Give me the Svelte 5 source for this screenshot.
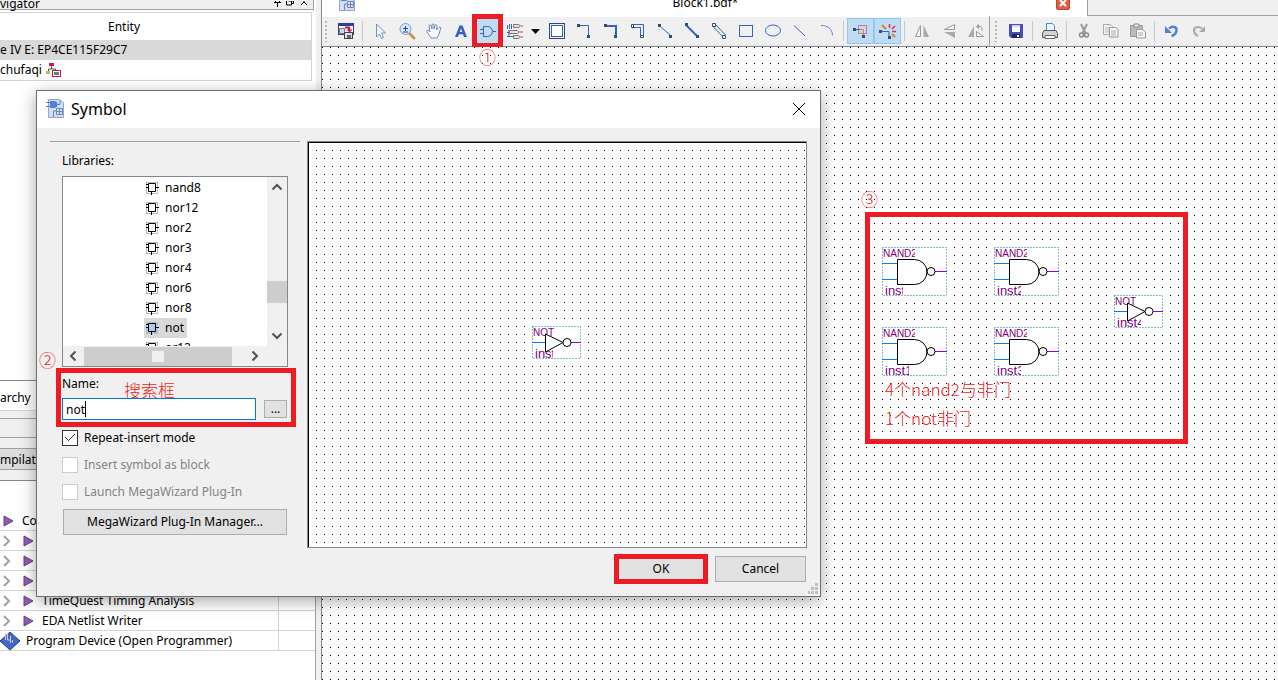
<script lang="ts">
	type Tool = { id: string; label: string; icon?: string; on?: boolean; marked?: boolean };

	const BLUE = '#3a5fc0';
	const NODE = '#2f4f6f';

	const mainTools: Tool[] = [
		{
			id: 'detach',
			label: 'Detach window',
			icon: `<rect x="0.5" y="0.5" width="15" height="11" fill="#fff" stroke="#2c3f9e"/><rect x="0" y="0" width="16" height="3" fill="#2c3f9e"/><path d="M1.500 5.500h5v5h-5z" fill="#d4d8e2" stroke="#777"/><path d="M7 4.500h4v3" fill="none" stroke="#d0103a" stroke-width="2"/><path d="M8.500 6.500h6l-3 3z" fill="#d0103a"/><rect x="6.500" y="9.500" width="8" height="6" fill="#dde" stroke="#444"/><path d="M9 12h4v3H9z" fill="#666"/>`
		},
		{ id: 'sep1', label: '' },
		{
			id: 'select',
			label: 'Selection tool',
			icon: `<path d="M4.500 1v13l3-3 2 4.500 2-1-2-4.500h4z" fill="#f4f7ff" stroke="#7a8fb8"/>`
		},
		{
			id: 'zoom',
			label: 'Zoom tool',
			icon: `<path d="M10 10l5 5" stroke="#c9925a" stroke-width="3" stroke-linecap="round"/><circle cx="6.500" cy="6" r="5.500" fill="#d6e8fb" stroke="#7f9cc8"/><path d="M6.500 3v5M4 5.500h5M4 9h5" stroke="#2446a8"/>`
		},
		{
			id: 'hand',
			label: 'Hand tool',
			icon: `<path d="M5 15L1 9c-1-2 1-2.500 2-1l1 1-1-6c0-1.500 1.500-1.500 2 0l1 3V2c0-1.500 2-1.500 2 0v4l1-3.500c.5-1.500 2-1 2 .5L10.500 7 13 4.500c1-1 2.500-.5 1.500 1.500L13 11l-2 4z" fill="#f7f9ff" stroke="#7389b4"/>`
		},
		{
			id: 'text',
			label: 'Text tool',
			icon: `<path d="M2 14L6.500 2.500h3L14 14h-3l-1-2.800H6L5 14zM6.800 9h2.500L8 5.300z" fill="${BLUE}" fill-rule="evenodd"/>`
		},
		{
			id: 'symbol',
			label: 'Symbol tool',
			on: true,
			marked: true,
			icon: `<path d="M3.500 3.500h4a5 5 0 0 1 0 10h-4zM0 6.500h3.500M0 10.500h3.500M12.500 8.500H16" fill="none" stroke="${BLUE}"/>`
		},
		{
			id: 'pin',
			label: 'Pin tool',
			icon: `<path d="M.5 2v4M2.500 6V1M4.500 1v5M0 9.500h5M0 13.500h6M2 7v6" fill="none" stroke="${BLUE}"/><path d="M6.500 1.500h5l2 1.500-2 1.500h-5zM2.500 7.500h8l2 1.500-2 1.500h-8zM6.500 12.500h5l2 1.500-2 1.500h-5z" fill="#e3e3e8" stroke="#777"/><path d="M14 3h2M13 9h3M14 14h2" stroke="#e03030"/>`
		},
		{ id: 'drop', label: 'Pin options' },
		{
			id: 'block',
			label: 'Block tool',
			icon: `<rect x="0.500" y="0.500" width="15" height="15" fill="none" stroke="${NODE}"/><rect x="2.500" y="2.500" width="11" height="11" fill="#fff" stroke="${BLUE}"/>`
		},
		{
			id: 'node',
			label: 'Orthogonal node tool',
			icon: `<path d="M3 2.500h9.500V13" fill="none" stroke="${BLUE}"/><path d="M1 1h3v3H1zM11 12h3v3h-3z" fill="${NODE}"/>`
		},
		{
			id: 'bus',
			label: 'Orthogonal bus tool',
			icon: `<path d="M3 3h10v10" fill="none" stroke="${BLUE}" stroke-width="2"/><path d="M1 1h3v3H1zM11 12h3v3h-3z" fill="${NODE}"/>`
		},
		{
			id: 'conduit',
			label: 'Orthogonal conduit tool',
			icon: `<path d="M3 1.500h10.500V13M3 4.500h7.500V13" fill="none" stroke="${BLUE}"/><path d="M1.500 1.500h2v3h-2zM10.500 12.500h3v2h-3z" fill="#fff" stroke="${NODE}"/>`
		},
		{
			id: 'dnode',
			label: 'Diagonal node tool',
			icon: `<path d="M3 3l11 10" stroke="${BLUE}"/><path d="M1 1h3v3H1zM12 12h3v3h-3z" fill="${NODE}"/>`
		},
		{
			id: 'dbus',
			label: 'Diagonal bus tool',
			icon: `<path d="M2 2l11 11" stroke="${BLUE}" stroke-width="2"/><path d="M1 0h3v3H1zM12 12h3v3h-3z" fill="${NODE}"/>`
		},
		{
			id: 'dconduit',
			label: 'Diagonal conduit tool',
			icon: `<path d="M4 1l10.500 11M2 3.500L12 14" stroke="${BLUE}"/><path d="M1.500 0.500h3v3h-3zM11.500 12.500h3v3h-3z" fill="#fff" stroke="${NODE}"/>`
		},
		{
			id: 'rect',
			label: 'Rectangle tool',
			icon: `<rect x="1.500" y="2.500" width="13" height="11" fill="none" stroke="${BLUE}"/>`
		},
		{
			id: 'oval',
			label: 'Oval tool',
			icon: `<ellipse cx="8" cy="7.500" rx="7.500" ry="5.500" fill="none" stroke="${BLUE}"/>`
		},
		{ id: 'line', label: 'Line tool', icon: `<path d="M2 2.500l11 10.500" stroke="${BLUE}"/>` },
		{
			id: 'arc',
			label: 'Arc tool',
			icon: `<path d="M2 2.500c6 0 11.500 3 11.500 10" fill="none" stroke="#6c87cc"/>`
		},
		{ id: 'sep2', label: '' },
		{
			id: 'rubber',
			label: 'Use rubberbanding',
			on: true,
			icon: `<path d="M5.500 2.500h8v8h-8z" fill="none" stroke="#d01050" stroke-dasharray="1 1"/><path d="M2 6.500h8" stroke="${BLUE}"/><path d="M7 6.500h3.500V13" fill="none" stroke="#e08020"/><path d="M0 5h3v3H0zM9 12h3v3H9z" fill="${NODE}"/>`
		},
		{
			id: 'partial',
			label: 'Use partial line selection',
			on: true,
			icon: `<path d="M1 8.500h8v6" fill="none" stroke="${BLUE}"/><path d="M-1 7h3v3h-3zM8 13h3v3H8z" fill="${NODE}"/><path d="M2 2l4 4M12 11l3 3" stroke="#e08020" stroke-width="2"/><path d="M9.500 1v4M12 6l3-3M12 8.500h4" stroke="#e03050" stroke-width="1.500"/>`
		},
		{ id: 'sep3', label: '' },
		{
			id: 'fliph',
			label: 'Flip horizontal',
			icon: `<path d="M6.500 2.500v11h-5z" fill="#f4f4f4" stroke="#999"/><path d="M9.500 2v12H15z" fill="#aaa"/>`
		},
		{
			id: 'flipv',
			label: 'Flip vertical',
			icon: `<path d="M13.500 1.500v5h-10z" fill="#f4f4f4" stroke="#999"/><path d="M14 9v6L3 9z" fill="#aaa"/>`
		},
		{
			id: 'rotate',
			label: 'Rotate left',
			icon: `<path d="M6 3v11H0z" fill="#aaa"/><path d="M8.500 13.500h7l-7-5z" fill="#fff" stroke="#999"/><path d="M10 3.500h2c2 0 2 2 2 4" fill="none" stroke="#999"/><path d="M8 3.500l3-2.500v5z" fill="#999"/>`
		}
	];

	const fileTools: Tool[] = [
		{
			id: 'save',
			label: 'Save',
			icon: `<path d="M1 1h14v14H3l-2-2z" fill="#4a4cbc"/><path d="M4 2h8v7H4z" fill="#fff"/><path d="M4 2h8v2H4z" fill="#ccd6f8"/><path d="M4 11h8v4H4z" fill="#222858"/><path d="M9 12h2v2H9z" fill="#fff"/>`
		},
		{ id: 'sep4', label: '' },
		{
			id: 'print',
			label: 'Print',
			icon: `<path d="M4.500 8V.5h6l2 2V8z" fill="#eaf3ff" stroke="#4a8ad0"/><path d="M2 7.500h12l1.500 3v4H.5v-4z" fill="#d4d4d4" stroke="#555"/><path d="M3 12.500h10v3H3z" fill="#fff" stroke="#666"/>`
		},
		{ id: 'sep5', label: '' },
		{
			id: 'cut',
			label: 'Cut',
			icon: `<path d="M5 1l4.500 9M11 1L6.500 10" stroke="#999" stroke-width="2"/><circle cx="5.500" cy="12" r="2" fill="none" stroke="#8a8a8a" stroke-width="1.500"/><circle cx="10.500" cy="12" r="2" fill="none" stroke="#8a8a8a" stroke-width="1.500"/>`
		},
		{
			id: 'copy',
			label: 'Copy',
			icon: `<path d="M.5 1.500h7l2 2v8h-9z" fill="#f4f4f4" stroke="#aaa"/><path d="M2 5h5M2 7h5M2 9h5" stroke="#bbb"/><path d="M6.500 4.500h6l2.500 2v7.500H6.500z" fill="#f8f8f8" stroke="#999"/><path d="M8 8h5M8 10h5M8 12h5" stroke="#aaa"/>`
		},
		{
			id: 'paste',
			label: 'Paste',
			icon: `<path d="M.5 2.500h12v11H.5z" fill="#bbb" stroke="#999"/><path d="M4 1h5v3H4z" fill="#eee" stroke="#888"/><path d="M6.500 6.500h6l3 2.500v6h-9z" fill="#f6f6f6" stroke="#999"/><path d="M8 10h5M8 12h5" stroke="#aaa"/>`
		},
		{ id: 'sep6', label: '' },
		{
			id: 'undo',
			label: 'Undo',
			icon: `<path d="M5 5.500c4-3 8-1.500 7.500 2-.3 2.500-2 4.500-5 5.500" fill="none" stroke="#4f80dd" stroke-width="2.500"/><path d="M1 3v7h7z" fill="#4f80dd"/>`
		},
		{
			id: 'redo',
			label: 'Redo',
			icon: `<path d="M11 5.500C7 2.500 2.500 4.500 3 8c.3 2 1.500 4 4 5" fill="none" stroke="#aaa" stroke-width="2"/><path d="M14 3v6H8z" fill="#aaa"/>`
		}
	];

	const symbols = ['nand8', 'nor12', 'nor2', 'nor3', 'nor4', 'nor6', 'nor8', 'not', 'or12'];

	const tasks = [
		'Analysis & Synthesis',
		'Fitter (Place & Route)',
		'Assembler (Generate files)',
		'TimeQuest Timing Analysis',
		'EDA Netlist Writer'
	];

	const gates = [
		{ name: 'inst', x: 560, y: 200, clip: 18 },
		{ name: 'inst2', x: 672, y: 200, clip: 24 },
		{ name: 'inst1', x: 560, y: 280, clip: 24 },
		{ name: 'inst3', x: 672, y: 280, clip: 24 }
	];

	let selected = $state('not');
	let name = $state('not');
	let repeat = $state(true);
</script>

{#snippet tool(t: Tool)}
	{#if t.id.startsWith('sep')}
		<span class="sep"></span>
	{:else if t.id === 'drop'}
		<button class="tool drop" aria-label={t.label}>
			<svg width="9" height="5" viewBox="0 0 9 5"><path d="M0 0h9L4.500 5z" /></svg>
		</button>
	{:else}
		<button class="tool" class:on={t.on} class:marked={t.marked} aria-label={t.label}>
			<svg width="16" height="16" viewBox="0 0 16 16" overflow="visible">{@html t.icon}</svg>
		</button>
	{/if}
{/snippet}

{#snippet notGate(inst: string, clip: number)}
	<svg class="gate" width="49" height="33" viewBox="0 0 49 33">
		<rect width="49" height="33" fill="#fff" />
		<rect x="0.5" y="0.5" width="48" height="32" class="bounds" />
		<text x="1" y="10" class="kind">NOT</text>
		<svg x="3" y="18" width={clip} height="15"><text x="0" y="14" class="inst">{inst}</text></svg>
		<path d="M0 16.500h13" class="in" />
		<path d="M39 16.500h10" class="out" />
		<path d="M13.500 8v18L31 16.500z" class="body" />
		<circle cx="35" cy="16.500" r="4" class="body" />
	</svg>
{/snippet}

{#snippet nandGate(inst: string, clip: number)}
	<svg class="gate" width="65" height="49" viewBox="0 0 65 49">
		<rect width="65" height="49" fill="#fff" />
		<rect x="0.5" y="0.5" width="64" height="48" class="bounds" />
		<svg x="1" y="0" width="32" height="14"><text x="0" y="10" class="kind">NAND2</text></svg>
		<svg x="3" y="34" width={clip} height="15"><text x="0" y="14" class="inst">{inst}</text></svg>
		<path d="M0 16.500h15M0 32.500h15" class="in" />
		<path d="M53 24.500h12" class="out" />
		<path d="M15.500 12.500h17a12 12 0 0 1 0 25h-17z" class="body" />
		<circle cx="49" cy="24.500" r="4" class="body" />
	</svg>
{/snippet}

{#snippet docIcon()}
	<svg width="18" height="21" viewBox="0 0 18 21">
		<path d="M2.500 1.500h11l4 3v15h-15z" fill="#d3def2" stroke="#8fa6cf" />
		<path d="M0 4.500h5M0 8.500h5M11 6.500h3v-4" fill="none" stroke="#5c7fc0" />
		<path d="M4 3h4a3.500 3.500 0 0 1 0 7H4z" fill="#4f7fd8" />
		<path d="M7.500 19v-6h3M10.500 10.500h6v6h-6zM10.500 13.500h6M13.500 10.500v6" fill="none" stroke="#6f86b4" />
	</svg>
{/snippet}

{#snippet chevron(d: string)}
	<svg width="12" height="12" viewBox="0 0 12 12"><path {d} fill="none" stroke="#505050" stroke-width="2" /></svg>
{/snippet}

{#snippet play()}
	<svg width="11" height="12" viewBox="0 0 11 12">
		<path d="M1 1l9 5-9 5z" fill="#9a55b8" stroke="#5d4a72" />
	</svg>
{/snippet}

<div class="app">
	<aside>
		<div class="dock-title">
			<span>vigator</span>
			<svg width="36" height="8" viewBox="0 0 36 8" fill="none" stroke="#000">
				<path d="M1 1.500h7M2.500 0v1M6.500 0v1M4.500 2v4M13.500 0v4h5V0M15.500 0h5v2.500h-2M28 4l3-3 3 3M31 1V0" />
			</svg>
		</div>
		<div class="entities">
			<div class="entity head">Entity</div>
			<div class="entity current">e IV E: EP4CE115F29C7</div>
			<div class="entity">
				chufaqi
				<svg width="15" height="14" viewBox="0 0 15 14">
					<path d="M5.500 3v3M2.500 9V6h7v2" fill="none" stroke="#456" />
					<path d="M3 0h5v3H3z" fill="#d8144c" />
					<path d="M0 8h4v3H0z" fill="#c8b84a" />
					<rect x="6.500" y="7.500" width="8" height="6" fill="#fff" stroke="#e01050" />
					<path d="M8 9h5v3H8z" fill="#5c8a78" />
				</svg>
			</div>
		</div>
		<div class="tabs">archy</div>
		<div class="tasks-title"></div>
		<div class="flow">mpilation</div>
		<div class="tasks">
			<div class="task"><span class="cell">{@render play()}Compile</span></div>
			{#each tasks as task}
				<div class="task">
					<span class="cell">
						<svg width="8" height="12" viewBox="0 0 8 12">
							<path d="M1 1l5 5-5 5" fill="none" stroke="#a0a0a0" stroke-width="2" />
						</svg>
						{@render play()}
						{task}
					</span>
				</div>
			{/each}
			<div class="task">
				<span class="cell device">
					<svg width="20" height="20" viewBox="0 0 20 20">
						<path d="M0 10L10 1l10 9-10 9z" fill="#3f68c4" stroke="#2b4688" />
						<path d="M5.500 2v7M7.500 3v6h3v3M10.500 5v4M12.500 9v3" fill="none" stroke="#d8c8e8" />
					</svg>
					Program Device (Open Programmer)
				</span>
			</div>
		</div>
	</aside>

	<main>
		<div class="strip">
			<div class="doc-tab">
				{@render docIcon()}
				<span>Block1.bdf*</span>
				<button class="close-tab" aria-label="Close Block1.bdf">
					<svg width="8" height="8" viewBox="0 0 8 8"><path d="M1 1l6 6M7 1L1 7" stroke="#fff" stroke-width="2" /></svg>
				</button>
			</div>
			<div class="strip-rest"></div>
		</div>
		<div class="toolbar">
			<span class="handle"></span>
			{#each mainTools as t (t.id)}{@render tool(t)}{/each}
			<span class="split"></span>
			<span class="handle"></span>
			{#each fileTools as t (t.id)}{@render tool(t)}{/each}
		</div>
		<div class="canvas">
			{#each gates as g}
				<div class="item" style="left: {g.x}px; top: {g.y}px">{@render nandGate(g.name, g.clip)}</div>
			{/each}
			<div class="item" style="left: 792px; top: 248px">{@render notGate('inst4', 24)}</div>
			<span class="step one">①</span>
			<span class="step three">③</span>
			<div class="frame">
				<p>4个nand2与非门</p>
				<p>1个not非门</p>
			</div>
		</div>
	</main>

	<div class="dialog" role="dialog" aria-labelledby="dlg-title">
		<header>
			{@render docIcon()}
			<span id="dlg-title">Symbol</span>
			<button class="close" aria-label="Close">
				<svg width="12" height="12" viewBox="0 0 12 12"><path d="M0 0l12 12M12 0L0 12" stroke="#000" /></svg>
			</button>
		</header>
		<div class="body">
			<div class="options">
				<span class="lib-label">Libraries:</span>
				<div class="list">
					<div class="rows">
						<ul>
							{#each symbols as s}
								<li>
									<button class="symbol" class:selected={s === selected} onclick={() => (selected = name = s)}>
										<svg width="13" height="13" viewBox="0 0 13 13">
											<rect x="0.500" y="0.500" width="11" height="11" fill={s === selected ? '#a8cdec' : '#fff'} stroke="#bbb" />
											<path d="M2.500 1.500h7v8h-7zM0 2.500h2M0 5.500h2M10 5.500h3M5.500 10v3" fill="none" stroke="#000" />
										</svg>
										{s}
									</button>
								</li>
							{/each}
						</ul>
						<div class="vbar">
							{@render chevron('M1.500 8.500L6 4l4.500 4.500')}
							<span class="vthumb"></span>
							{@render chevron('M1.500 3.500L6 8l4.500-4.500')}
						</div>
					</div>
					<div class="hbar">
						{@render chevron('M8.500 1.500L4 6l4.500 4.500')}
						<span class="hthumb"></span>
						{@render chevron('M3.500 1.500L8 6l-4.500 4.500')}
					</div>
				</div>
				<div class="name">
					<div class="name-head">
						<label for="name">Name:</label>
						<span class="note">搜索框</span>
					</div>
					<div class="name-row">
						<div class="field">
							<input id="name" type="text" bind:value={name} />
							<span class="caret"></span>
						</div>
						<button class="btn browse" aria-label="Browse">...</button>
					</div>
				</div>
				<label class="check"><input type="checkbox" bind:checked={repeat} />Repeat-insert mode</label>
				<label class="check off"><input type="checkbox" disabled />Insert symbol as block</label>
				<label class="check off"><input type="checkbox" disabled />Launch MegaWizard Plug-In</label>
				<button class="btn wizard">MegaWizard Plug-In Manager...</button>
			</div>
			<div class="preview">{@render notGate('inst', 18)}</div>
		</div>
		<footer>
			<button class="btn ok">OK</button>
			<button class="btn cancel">Cancel</button>
		</footer>
		<span class="step two">②</span>
		<svg class="grip" width="10" height="11" viewBox="0 0 10 11" fill="#bfbfbf">
			<path d="M7 0h3v3H7zM3 4h3v3H3zM7 4h3v3H7zM0 8h2v3H0zM3 8h3v3H3zM7 8h3v3H7z" />
		</svg>
	</div>
</div>

<style>
	:global(body) {
		margin: 0;
		overflow: hidden;
	}

	.app {
		--red: #ed1c24;
		--edge: #828790;
		position: relative;
		display: flex;
		height: 100vh;
		overflow: hidden;
		background: #f0f0f0;
		color: #000;
		font: 12px/16px 'Noto Sans', sans-serif;
	}

	button {
		font: inherit;
		color: inherit;
		padding: 0;
		border: 0;
		background: none;
	}

	svg {
		display: block;
		flex-shrink: 0;
	}

	aside {
		width: 316px;
		flex-shrink: 0;
		display: flex;
		flex-direction: column;
		box-sizing: border-box;
		background: #fff;
		white-space: nowrap;
	}

	.dock-title {
		display: flex;
		align-items: flex-end;
		justify-content: space-between;
		height: 9px;
		padding-right: 4px;
		margin-right: 2px;
		background: #f0f0f0;
		border-bottom: 1px solid #a0a0a0;
		border-right: 1px solid #a0a0a0;
	}

	.dock-title span {
		height: 13px;
	}

	.entities {
		margin: 2px 4px 0 0;
		border: 1px solid #d4d4d4;
		border-left: 0;
	}

	.entity {
		display: flex;
		align-items: center;
		gap: 4px;
		height: 20px;
	}

	.head {
		justify-content: flex-end;
		height: 27px;
		padding-right: 171px;
	}

	.current {
		background: #d9d9d9;
	}

	.tabs {
		margin-top: 299px;
		border-top: 1px solid var(--edge);
		border-bottom: 1px solid #d4d4d4;
		height: 29px;
		line-height: 33px;
	}

	.tasks-title {
		height: 18px;
		padding-top: 8px;
		background: linear-gradient(#a0a0a0, #a0a0a0) 0 7px / 100% 1px no-repeat #f0f0f0;
		border-bottom: 1px solid #a0a0a0;
	}

	.flow {
		height: 20px;
		line-height: 22px;
		margin: 10px 0;
		border: solid #a0a0a0;
		border-width: 1px 0;
		outline: 10px solid #f0f0f0;
		background: #dcdcdc;
	}

	.tasks {
		position: relative;
		flex: 1;
		padding-top: 30px;
		border-top: 1px solid var(--edge);
		border-right: 1px solid #a0a0a0;
		background: #fff;
	}

	.task {
		display: flex;
		height: 19px;
		border-bottom: 1px solid #d4d4d4;
	}

	.cell {
		display: flex;
		align-items: center;
		gap: 8px;
		width: 275px;
		padding-left: 3px;
		border-right: 1px solid #d4d4d4;
	}

	.cell :global(svg + svg) {
		margin-left: 4px;
	}

	.device {
		gap: 6px;
		padding-left: 0;
		width: 278px;
	}

	main {
		flex: 1;
		min-width: 0;
		display: flex;
		flex-direction: column;
		margin-left: 5px;
		border-left: 1px solid var(--edge);
	}

	.strip {
		display: flex;
		height: 16px;
	}

	.doc-tab {
		flex: 1;
		display: flex;
		align-items: flex-end;
		justify-content: space-between;
		padding: 0 17px 5px 15px;
		height: 12px;
		overflow: hidden;
		background: #fff;
	}

	.doc-tab span {
		height: 17px;
	}

	.close-tab {
		display: grid;
		place-items: center;
		width: 14px;
		height: 14px;
		margin-bottom: 2px;
		border-radius: 2px;
		background: #dd6244;
		border: 1px solid #c8402c;
	}

	.strip-rest {
		width: 190px;
		height: 15px;
		border-left: 1px solid #a0a0a0;
		border-bottom: 1px solid #a0a0a0;
	}

	.toolbar {
		display: flex;
		align-items: center;
		height: 30px;
		border-bottom: 1px solid var(--edge);
		white-space: nowrap;
	}

	.handle {
		width: 10px;
		height: 22px;
		background: radial-gradient(circle, #b8b8b8 1px, transparent 1px) 1px 0 / 6px 4px repeat-y;
	}

	.split {
		width: 2px;
		height: 30px;
		border-left: 1px solid #a0a0a0;
	}

	.tool {
		display: grid;
		place-items: center;
		box-sizing: border-box;
		width: 27px;
		height: 26px;
	}

	.drop {
		width: 15px;
	}

	.tool.on {
		background: #bfdcf3;
		border: 1px solid #90c8f6;
	}

	.tool.marked {
		position: relative;
		outline: 5px solid var(--red);
		outline-offset: -3px;
		height: 30px;
	}

	.sep {
		width: 1px;
		height: 20px;
		margin: 0 3px;
		background: #c8c8c8;
	}

	.canvas,
	.preview {
		background:
			linear-gradient(90deg, transparent 1px, #fff 1px) 0 0 / 8px 8px,
			linear-gradient(#000 1px, #fff 1px) 0 0 / 8px 8px;
	}

	.canvas {
		position: relative;
		flex: 1;
	}

	.item {
		position: absolute;
	}

	.gate .bounds {
		fill: none;
		stroke: #008080;
		stroke-dasharray: 1 2;
	}

	.gate text {
		fill: #800080;
		font-family: 'Liberation Sans', sans-serif;
	}

	.gate .kind {
		font-size: 10px;
	}

	.gate .inst {
		font-size: 13px;
	}

	.gate .in {
		stroke: #0080ff;
	}

	.gate .out {
		stroke: #8000ff;
	}

	.gate .body {
		fill: none;
		stroke: #000;
	}

	.step,
	.note,
	.frame {
		color: var(--red);
		font-family: 'Noto Sans CJK SC', sans-serif;
		font-size: 17px;
		font-weight: 300;
		line-height: 20px;
	}

	.step {
		position: absolute;
	}

	.one {
		left: 157px;
		top: 0;
	}

	.two {
		left: 2px;
		top: 259px;
	}

	.three {
		left: 539px;
		top: 142px;
	}

	.frame {
		position: absolute;
		left: 543px;
		top: 165px;
		box-sizing: border-box;
		width: 323px;
		height: 232px;
		padding: 162px 15px 0;
		border: 5px solid var(--red);
	}

	.frame p {
		margin: 0 0 9px;
	}

	.dialog {
		position: absolute;
		left: 36px;
		top: 90px;
		box-sizing: border-box;
		width: 785px;
		border: 1px solid #6e6e6e;
		background: #f0f0f0;
		box-shadow: 0 4px 16px rgba(0, 0, 0, 0.35);
	}

	header {
		display: flex;
		align-items: center;
		gap: 7px;
		height: 35px;
		padding: 0 15px 2px 9px;
		background: #fff;
		font: 16px/20px 'Noto Sans', sans-serif;
	}

	.close {
		margin-left: auto;
	}

	.body {
		display: flex;
		gap: 7px;
		padding: 13px 13px 0;
	}

	.options {
		display: flex;
		flex-direction: column;
		box-sizing: border-box;
		width: 250px;
		padding: 11px 12px 13px;
		border-top: 1px solid #a0a0a0;
	}

	.list {
		margin-top: 7px;
		border: 1px solid var(--edge);
		background: #fff;
	}

	.rows {
		display: flex;
		height: 169px;
		overflow: hidden;
	}

	ul {
		flex: 1;
		list-style: none;
		margin: 0;
		padding: 1px 0 0 81px;
	}

	.symbol {
		display: flex;
		align-items: center;
		gap: 6px;
		height: 20px;
		padding: 0 3px 0 2px;
	}

	.symbol.selected {
		background: #d9d9d9;
	}

	.vbar {
		display: flex;
		flex-direction: column;
		align-items: center;
		justify-content: space-between;
		width: 20px;
		padding: 4px 0;
		box-sizing: border-box;
		background: #f0f0f0;
	}

	.vthumb {
		width: 20px;
		height: 22px;
		margin-top: 60px;
		background: #cdcdcd;
	}

	.hbar {
		display: flex;
		align-items: center;
		height: 20px;
		padding: 0 26px 0 4px;
		gap: 5px;
		background: #f0f0f0;
	}

	.hthumb {
		flex: 1;
		height: 19px;
		margin-right: 12px;
		background: linear-gradient(#f0f0f0, #f0f0f0) 50% 50% / 12px 11px no-repeat #cdcdcd;
	}

	.name {
		margin: 6px -3px 2px -1px;
		padding: 3px 4px 2px 1px;
		outline: 5px solid var(--red);
	}

	.name-head {
		display: flex;
		gap: 25px;
		height: 22px;
	}

	.note {
		padding-top: 4px;
		height: 16px;
	}

	.name-row {
		display: flex;
		align-items: center;
		gap: 8px;
	}

	.field {
		position: relative;
		flex: 1;
	}

	.field input {
		display: block;
		box-sizing: border-box;
		width: 100%;
		height: 22px;
		padding: 0 3px;
		border: 1px solid #0078d7;
		background: #fff;
		font: inherit;
		color: inherit;
		outline: 0;
	}

	.caret {
		position: absolute;
		left: 23px;
		top: 3px;
		width: 1px;
		height: 16px;
		background: #000;
	}

	.btn {
		box-sizing: border-box;
		height: 26px;
		border: 1px solid #adadad;
		background: #e1e1e1;
	}

	.browse {
		width: 23px;
		height: 18px;
		line-height: 16px;
	}

	.check {
		display: flex;
		align-items: center;
		gap: 6px;
		height: 27px;
	}

	.check input {
		appearance: none;
		box-sizing: border-box;
		width: 16px;
		height: 16px;
		margin: 0;
		border: 1px solid #333;
		background: #fff;
	}

	.check input:checked {
		background:
			linear-gradient(45deg, transparent 42%, #333 42% 58%, transparent 58%) 2px 6px / 4px 4px no-repeat,
			linear-gradient(-45deg, transparent 45%, #333 45% 55%, transparent 55%) 5px 3px / 7px 7px no-repeat,
			#fff;
	}

	.check.off {
		color: #838383;
	}

	.check.off input {
		border-color: #ccc;
	}

	.wizard {
		margin: 4px 1px 0;
	}

	.preview {
		flex: 1;
		display: grid;
		place-items: center;
		padding: 0 2px 4px 0;
		border: 1px solid var(--edge);
		box-shadow: inset 1px 1px #000;
		background-position: 8px 8px;
	}

	footer {
		display: flex;
		justify-content: flex-end;
		gap: 9px;
		padding: 8px 14px 14px;
	}

	.ok {
		width: 90px;
		outline: 5px solid var(--red);
		outline-offset: -3px;
	}

	.cancel {
		width: 91px;
	}

	.grip {
		position: absolute;
		right: 2px;
		bottom: 2px;
	}
</style>
